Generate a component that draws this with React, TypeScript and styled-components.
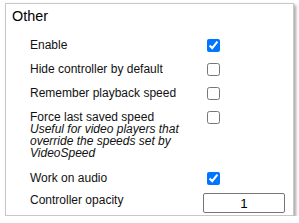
import React from "react";
import styled, { createGlobalStyle } from "styled-components";

const Global = createGlobalStyle`
  html, body { margin: 0; padding: 0; background: #fff; }
  body { font-family: "Liberation Sans", Arial, sans-serif; color: #000; }
`;

const Page = styled.div`
  padding: 3px 0 0 5px;
`;

const Card = styled.section`
  box-sizing: border-box;
  width: 289px;
  border: 1px solid #c8c8c8;
  box-shadow: 2px 2px 3px rgba(0, 0, 0, 0.35);
  background: #fff;
  padding: 4px 0 2px 0;
`;

const Title = styled.h3`
  margin: 0 0 0 6px;
  font-size: 14.4px;
  font-weight: normal;
  line-height: 17px;
`;

const Rows = styled.div`
  display: flex;
  flex-direction: column;
  padding-left: 24px;
  margin-top: 14px;
`;

const Row = styled.div<{ $top?: number }>`
  display: flex;
  align-items: flex-start;
  margin-top: ${(p) => (p.$top ?? 11)}px;
  &:first-child { margin-top: 0; }
`;

const Label = styled.label<{ $offset?: number }>`
  width: 170px;
  margin-right: 3px;
  margin-top: ${(p) => p.$offset ?? 0}px;
  font-size: 12px;
  line-height: 12px;
  color: #111;
`;

const Description = styled.em`
  display: block;
  margin-bottom: 2px;
`;

const Check = styled.input.attrs({ type: "checkbox" })`
  width: 13px;
  height: 13px;
  margin: 0 0 0 4px;
`;

const TextInput = styled.input.attrs({ type: "text" })`
  box-sizing: border-box;
  width: 82px;
  height: 20px;
  margin: 0;
  padding: 1px 2px;
  border: 1px solid #767676;
  border-radius: 2px;
  font-family: "Liberation Sans", Arial, sans-serif;
  font-size: 13.33px;
  text-align: center;
  color: #000;
`;

export default function App() {
  return (
    <>
      <Global />
      <Page>
        <Card>
          <Title>Other</Title>
          <Rows>
            <Row>
              <Label>Enable</Label>
              <Check defaultChecked />
            </Row>
            <Row>
              <Label>Hide controller by default</Label>
              <Check />
            </Row>
            <Row>
              <Label>Remember playback speed</Label>
              <Check />
            </Row>
            <Row>
              <Label>
                Force last saved speed
                <Description>
                  Useful for video players that override the speeds set by
                  VideoSpeed
                </Description>
              </Label>
              <Check />
            </Row>
            <Row>
              <Label>Work on audio</Label>
              <Check defaultChecked />
            </Row>
            <Row $top={8}>
              <Label $offset={1}>Controller opacity</Label>
              <TextInput defaultValue="1" />
            </Row>
          </Rows>
        </Card>
      </Page>
    </>
  );
}
